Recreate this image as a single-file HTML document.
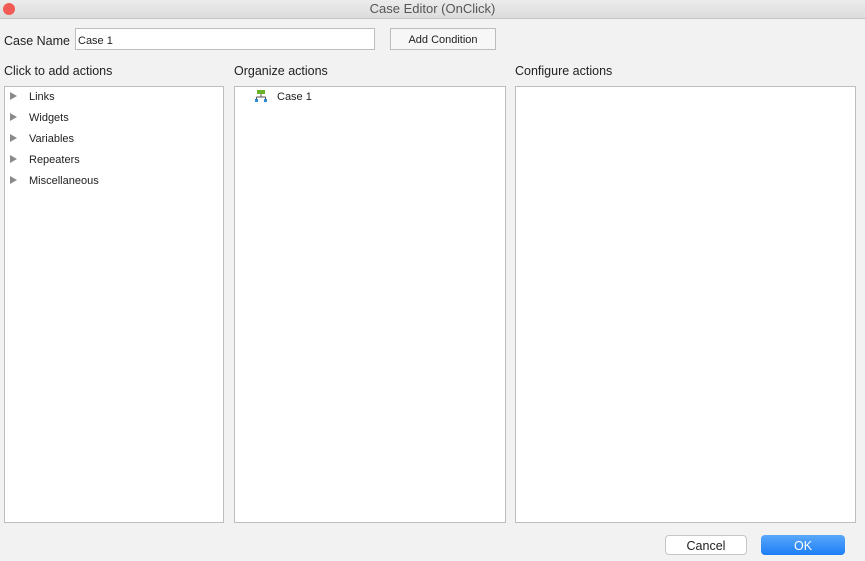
<!DOCTYPE html>
<html><head><style>
body{margin:0;width:865px;height:561px;background:#f2f2f2;font-family:"Liberation Sans",sans-serif;position:relative;overflow:hidden;color:#222}
.a{position:absolute}
.title{left:0;top:0;width:865px;height:18px;background:linear-gradient(#ececec,#dcdcdc);border-bottom:1px solid #c8c8c8;text-align:center;font-size:13px;line-height:18px;color:#555}
.dot{left:3px;top:3px;width:12px;height:12px;border-radius:50%;background:#f25b55}
.lbl{font-size:12.5px}
.box{background:#fff;border:1px solid #bdbdbd;box-sizing:border-box}
.it{font-size:11px;left:24px}
.tri{left:10px;width:0;height:0;border-left:7px solid #8a8a8a;border-top:4px solid transparent;border-bottom:4px solid transparent}
</style></head><body>
<div class="a title">Case Editor (OnClick)</div>
<div class="a dot"></div>
<div class="a lbl" style="left:4px;top:34px">Case Name</div>
<div class="a box" style="left:75px;top:28px;width:300px;height:22px;font-size:11px;padding:6px 2px">Case 1</div>
<div class="a box" style="left:390px;top:28px;width:106px;height:22px;background:#f7f7f7;font-size:11px;text-align:center;line-height:22px">Add Condition</div>
<div class="a lbl" style="left:4px;top:64px">Click to add actions</div>
<div class="a lbl" style="left:234px;top:64px">Organize actions</div>
<div class="a lbl" style="left:515px;top:64px">Configure actions</div>
<div class="a box" style="left:4px;top:86px;width:220px;height:437px"></div>
<div class="a box" style="left:234px;top:86px;width:272px;height:437px"></div>
<div class="a box" style="left:515px;top:86px;width:341px;height:437px"></div>
<div class="a tri" style="top:92px"></div><div class="a it" style="left:29px;top:91px">Links</div>
<div class="a tri" style="top:113px"></div><div class="a it" style="left:29px;top:112px">Widgets</div>
<div class="a tri" style="top:134px"></div><div class="a it" style="left:29px;top:133px">Variables</div>
<div class="a tri" style="top:155px"></div><div class="a it" style="left:29px;top:154px">Repeaters</div>
<div class="a tri" style="top:176px"></div><div class="a it" style="left:29px;top:175px">Miscellaneous</div>
<svg class="a" style="left:254px;top:90px" width="14" height="13"><rect x="3" y="0" width="8" height="4" fill="#6ab42a"/><path d="M7 4v3M2.5 7h9M2.5 7v3M11.5 7v3" stroke="#555" fill="none"/><rect x="1" y="9" width="3" height="3" fill="#2b8ad8"/><rect x="10" y="9" width="3" height="3" fill="#2b8ad8"/></svg>
<div class="a it" style="left:277px;top:91px">Case 1</div>
<div class="a" style="left:665px;top:535px;width:82px;height:20px;background:#fff;border:1px solid #c6c6c6;border-radius:4px;box-sizing:border-box;text-align:center;font-size:12.5px;line-height:20px">Cancel</div>
<div class="a" style="left:761px;top:535px;width:84px;height:20px;background:linear-gradient(#5aa8fb,#1c7ef5);border-radius:4px;text-align:center;color:#fff;font-size:12.5px;line-height:22px">OK</div>
</body></html>
